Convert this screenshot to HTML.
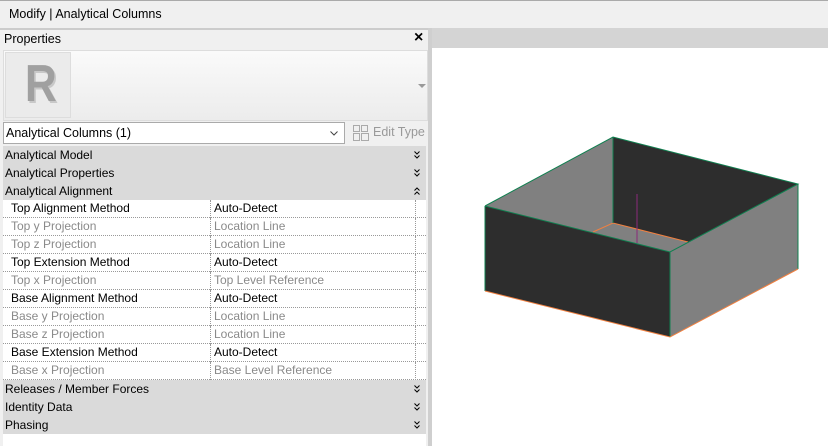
<!DOCTYPE html>
<html><head><style>
*{margin:0;padding:0;box-sizing:border-box}
body{width:828px;height:446px;overflow:hidden;background:#fff;font-family:"Liberation Sans",sans-serif;font-size:12px;color:#000;position:relative}
.abs{position:absolute}
.grp{position:absolute;left:3px;width:423px;height:18px;background:#dadada;line-height:18px;padding-left:2px}
.grp svg{position:absolute;right:6px;top:5px}
.row{position:absolute;left:3px;width:423px;height:18px;border-bottom:1px dotted #999;line-height:17px}
.row .a{position:absolute;left:8px}
.row .b{position:absolute;left:207px;top:0;height:18px;border-left:1px dotted #999;padding-left:3px}
.row .c{position:absolute;left:412px;top:0;height:18px;border-left:1px dotted #999}
.g{color:#8a8a8a}
</style></head><body>
<div class="abs" style="left:0;top:0;width:828px;height:28px;background:#f0f0f0;border-top:1px solid #aaa"></div>
<div class="abs" style="left:9px;top:7px;font-size:12.5px">Modify | Analytical Columns</div>
<div class="abs" style="left:0;top:28px;width:828px;height:2px;background:#ccc"></div>
<div class="abs" style="left:428px;top:28px;width:400px;height:20px;background:#d4d4d4"></div>
<div class="abs" style="left:428px;top:28px;width:4px;height:418px;background:#cfcfcf"></div>
<div class="abs" style="left:0;top:30px;width:428px;height:416px;background:#f0f0f0"></div>
<div class="abs" style="left:4px;top:32px;font-size:12.5px">Properties</div>
<div class="abs" style="left:414px;top:29px;font-size:16px;font-weight:bold">×</div>
<div class="abs" style="left:3px;top:50px;width:425px;height:71px;background:linear-gradient(#fafafa,#ececec);border:1px solid #ddd"></div>
<div class="abs" style="left:5px;top:52px;width:66px;height:66px;background:#ebebeb;border:1px solid #ddd"></div>
<div class="abs" style="left:22px;top:54px;font-size:52px;font-weight:bold;color:#a0a0a0;transform:scaleX(0.85);text-shadow:2px 2px 0 #c8c8c8">R</div>
<div class="abs" style="left:418px;top:84px;width:0;height:0;border-left:4px solid transparent;border-right:4px solid transparent;border-top:4px solid #999"></div>
<div class="abs" style="left:3px;top:122px;width:342px;height:22px;background:#fff;border:1px solid #aaa;line-height:20px;padding-left:2px;font-size:12.5px">Analytical Columns (1)<svg style="position:absolute;right:6px;top:8px" width="8" height="5"><polyline points="0.5,0.5 4,4 7.5,0.5" fill="none" stroke="#444"/></svg></div>
<svg class="abs" style="left:352px;top:124px" width="18" height="18" viewBox="0 0 18 18" fill="none" stroke="#aaa"><rect x="1.5" y="1.5" width="6" height="6"/><rect x="9.5" y="1.5" width="6" height="6"/><rect x="1.5" y="9.5" width="6" height="7"/><rect x="9.5" y="9.5" width="7" height="7"/></svg>
<div class="abs g" style="left:373px;top:125px;font-size:12.5px;color:#999">Edit Type</div>
<div class="grp" style="top:146px">Analytical Model<svg width="6" height="8"><polyline points="0.5,0.5 3,3 5.5,0.5" fill="none" stroke="#000"/><polyline points="0.5,4.5 3,7 5.5,4.5" fill="none" stroke="#000"/></svg></div>
<div class="grp" style="top:164px">Analytical Properties<svg width="6" height="8"><polyline points="0.5,0.5 3,3 5.5,0.5" fill="none" stroke="#000"/><polyline points="0.5,4.5 3,7 5.5,4.5" fill="none" stroke="#000"/></svg></div>
<div class="grp" style="top:182px">Analytical Alignment<svg width="6" height="8"><polyline points="0.5,3.5 3,1 5.5,3.5" fill="none" stroke="#000"/><polyline points="0.5,7.5 3,5 5.5,7.5" fill="none" stroke="#000"/></svg></div>
<div class="abs" style="left:3px;top:200px;width:423px;height:180px;background:#fff"></div>
<div class="row" style="top:200px"><span class="a">Top Alignment Method</span><span class="b">Auto-Detect</span><span class="c"></span></div>
<div class="row g" style="top:218px"><span class="a">Top y Projection</span><span class="b">Location Line</span><span class="c"></span></div>
<div class="row g" style="top:236px"><span class="a">Top z Projection</span><span class="b">Location Line</span><span class="c"></span></div>
<div class="row" style="top:254px"><span class="a">Top Extension Method</span><span class="b">Auto-Detect</span><span class="c"></span></div>
<div class="row g" style="top:272px"><span class="a">Top x Projection</span><span class="b">Top Level Reference</span><span class="c"></span></div>
<div class="row" style="top:290px"><span class="a">Base Alignment Method</span><span class="b">Auto-Detect</span><span class="c"></span></div>
<div class="row g" style="top:308px"><span class="a">Base y Projection</span><span class="b">Location Line</span><span class="c"></span></div>
<div class="row g" style="top:326px"><span class="a">Base z Projection</span><span class="b">Location Line</span><span class="c"></span></div>
<div class="row" style="top:344px"><span class="a">Base Extension Method</span><span class="b">Auto-Detect</span><span class="c"></span></div>
<div class="row g" style="top:362px"><span class="a">Base x Projection</span><span class="b">Base Level Reference</span><span class="c"></span></div>
<div class="grp" style="top:380px">Releases / Member Forces<svg width="6" height="8"><polyline points="0.5,0.5 3,3 5.5,0.5" fill="none" stroke="#000"/><polyline points="0.5,4.5 3,7 5.5,4.5" fill="none" stroke="#000"/></svg></div>
<div class="grp" style="top:398px">Identity Data<svg width="6" height="8"><polyline points="0.5,0.5 3,3 5.5,0.5" fill="none" stroke="#000"/><polyline points="0.5,4.5 3,7 5.5,4.5" fill="none" stroke="#000"/></svg></div>
<div class="grp" style="top:416px">Phasing<svg width="6" height="8"><polyline points="0.5,0.5 3,3 5.5,0.5" fill="none" stroke="#000"/><polyline points="0.5,4.5 3,7 5.5,4.5" fill="none" stroke="#000"/></svg></div>
<div class="abs" style="left:3px;top:434px;width:423px;height:12px;background:#fff"></div>
<svg class="abs" style="left:0;top:0" width="828" height="446">
<polygon points="485,206 613,137 798,184 670,252" fill="#808080"/>
<polygon points="613,137 798,184 688,242 613,223" fill="#2d2d2d"/>
<polyline points="593,232 613,223 688,242" stroke="#f08040" fill="none"/>
<line x1="637" y1="194" x2="637" y2="243" stroke="#8a2a7a"/>
<polygon points="670,252 798,184 798,269 670,337" fill="#808080"/>
<polygon points="485,206 670,252 670,337 485,291" fill="#2d2d2d"/>
<polyline points="485,206 613,137 798,184 670,252 485,206" stroke="#108050" fill="none"/>
<line x1="613" y1="137" x2="613" y2="223" stroke="#108050"/>
<line x1="485" y1="206" x2="485" y2="291" stroke="#108050"/>
<line x1="670" y1="252" x2="670" y2="337" stroke="#108050"/>
<line x1="798" y1="184" x2="798" y2="269" stroke="#108050"/>
<polyline points="485,291 670,337 798,269" stroke="#f08040" fill="none"/>
</svg>
</body></html>
